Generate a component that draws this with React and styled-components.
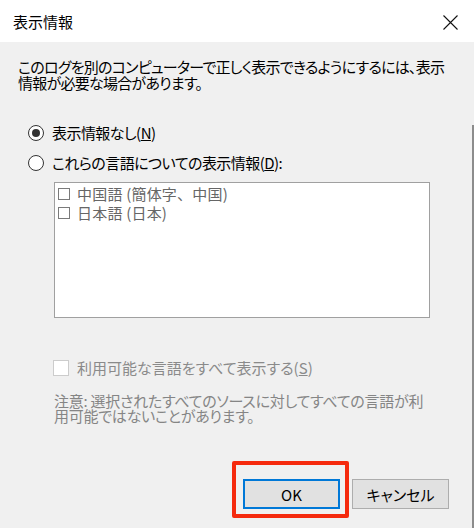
import React from "react";
import styled, { createGlobalStyle } from "styled-components";

const Global = createGlobalStyle`
  html, body { margin: 0; padding: 0; background: #f0f0f0; }
  body { font-family: "Noto Sans CJK JP", "Noto Sans", sans-serif; }
`;

const Window = styled.div`
  width: 474px;
  height: 528px;
  display: flex;
  flex-direction: column;
  background: #f0f0f0;
  color: #000;
  font-family: "Noto Sans CJK JP", "Noto Sans", sans-serif;
  overflow: hidden;
`;

const TitleBar = styled.div`
  height: 42px;
  flex: none;
  background: #ffffff;
  display: flex;
  align-items: center;
  justify-content: space-between;
  padding: 0 16px 0 13px;
`;

const Title = styled.div`
  font-size: 15px;
  line-height: 20px;
  margin-top: 2px;
`;

const CloseButton = styled.div`
  width: 15px;
  height: 15px;
  display: flex;
  margin-top: 2px;
`;

const Body = styled.div`
  position: relative;
  flex: 1;
  display: flex;
  flex-direction: column;
  padding: 17px 25px 19px 18px;
  font-feature-settings: "palt";
  &::after {
    content: "";
    position: absolute;
    right: 0;
    top: 83px;
    bottom: 0;
    width: 2px;
    background: #8c8c8c;
  }
`;

const Description = styled.div`
  font-size: 15px;
  line-height: 15.5px;
  letter-spacing: -0.75px;
  white-space: nowrap;
`;

const RadioGroup = styled.div`
  margin-top: 33px;
  display: flex;
  flex-direction: column;
  gap: 10px;
`;

const RadioRow = styled.div`
  display: flex;
  align-items: center;
  height: 20px;
  margin-left: 28px;
  margin-left: 10px;
  gap: 8px;
`;

const RadioCircle = styled.span`
  width: 16px;
  height: 16px;
  box-sizing: border-box;
  border: 1px solid #333;
  border-radius: 50%;
  background: #fff;
  display: flex;
  align-items: center;
  justify-content: center;
  &::after {
    content: "";
    width: 8px;
    height: 8px;
    border-radius: 50%;
    background: ${(p) => (p.$checked ? "#333" : "transparent")};
  }
`;

const Label = styled.span`
  font-size: 15px;
  line-height: 20px;
  white-space: nowrap;
  letter-spacing: ${(p) => (p.$disabled ? "0" : "-0.55px")};
  color: ${(p) => (p.$disabled ? "#8a8a8a" : "#000")};
`;

const ListBox = styled.div`
  margin-top: 9px;
  margin-left: 36px;
  width: 376px;
  height: 136px;
  box-sizing: border-box;
  border: 1px solid #a0a0a0;
  background: #fff;
  padding: 1px 0 0 3px;
  font-feature-settings: normal;
`;

const ListItem = styled.div`
  display: flex;
  align-items: center;
  height: 19px;
  gap: 7px;
`;

const SmallCheck = styled.span`
  width: 12px;
  height: 12px;
  box-sizing: border-box;
  border: 1px solid #7a7a7a;
  background: #fff;
`;

const ItemText = styled.span`
  font-size: 15px;
  line-height: 19px;
  color: #666;
  white-space: nowrap;
  letter-spacing: 0.2px;
`;

const ShowAllRow = styled.div`
  margin-top: 40px;
  margin-left: 35px;
  height: 20px;
  display: flex;
  align-items: center;
  gap: 8px;
`;

const BigCheck = styled.span`
  width: 16px;
  height: 16px;
  box-sizing: border-box;
  border: 1px solid #cccccc;
  background: #fff;
`;

const Note = styled.div`
  margin-top: 15px;
  margin-left: 36px;
  font-size: 15px;
  line-height: 15px;
  letter-spacing: -0.25px;
  color: #858585;
  white-space: nowrap;
`;

const ButtonRow = styled.div`
  margin-top: auto;
  display: flex;
  justify-content: flex-end;
  gap: 12px;
`;

const OkWrap = styled.div`
  position: relative;
  display: flex;
`;

const Highlight = styled.span`
  position: absolute;
  left: -11px;
  top: -18px;
  right: -9px;
  bottom: -9px;
  border: 4px solid #f52a0e;
  border-radius: 2px;
  pointer-events: none;
`;

const Button = styled.button`
  width: 97px;
  height: 30px;
  box-sizing: border-box;
  background: #e1e1e1;
  border: ${(p) => (p.$default ? "2px solid #0078d7" : "1px solid #adadad")};
  font-family: "Noto Sans CJK JP", "Noto Sans", sans-serif;
  font-feature-settings: "palt";
  font-size: 15px;
  color: #000;
  padding: 0;
  display: flex;
  align-items: center;
  justify-content: center;
`;

export default function App() {
  return (
    <>
      <Global />
      <Window>
        <TitleBar>
          <Title>表示情報</Title>
          <CloseButton>
            <svg width="15" height="15" viewBox="0 0 15 15">
              <path d="M0.5 0.5 L14.5 14.5 M14.5 0.5 L0.5 14.5" stroke="#111" strokeWidth="1.1" fill="none" />
            </svg>
          </CloseButton>
        </TitleBar>
        <Body>
          <Description>
            このログを別のコンピューターで正しく表示できるようにするには、表示
            <br />
            情報が必要な場合があります。
          </Description>
          <RadioGroup>
            <RadioRow>
              <RadioCircle $checked />
              <Label>
                表示情報なし(<u>N</u>)
              </Label>
            </RadioRow>
            <RadioRow>
              <RadioCircle />
              <Label>
                これらの言語についての表示情報(<u>D</u>):
              </Label>
            </RadioRow>
          </RadioGroup>
          <ListBox>
            <ListItem>
              <SmallCheck />
              <ItemText>中国語 (簡体字、中国)</ItemText>
            </ListItem>
            <ListItem>
              <SmallCheck />
              <ItemText>日本語 (日本)</ItemText>
            </ListItem>
          </ListBox>
          <ShowAllRow>
            <BigCheck />
            <Label $disabled>
              利用可能な言語をすべて表示する(<u>S</u>)
            </Label>
          </ShowAllRow>
          <Note>
            注意: 選択されたすべてのソースに対してすべての言語が利
            <br />
            用可能ではないことがあります。
          </Note>
          <ButtonRow>
            <OkWrap>
              <Highlight />
              <Button $default>OK</Button>
            </OkWrap>
            <Button>キャンセル</Button>
          </ButtonRow>
        </Body>
      </Window>
    </>
  );
}
